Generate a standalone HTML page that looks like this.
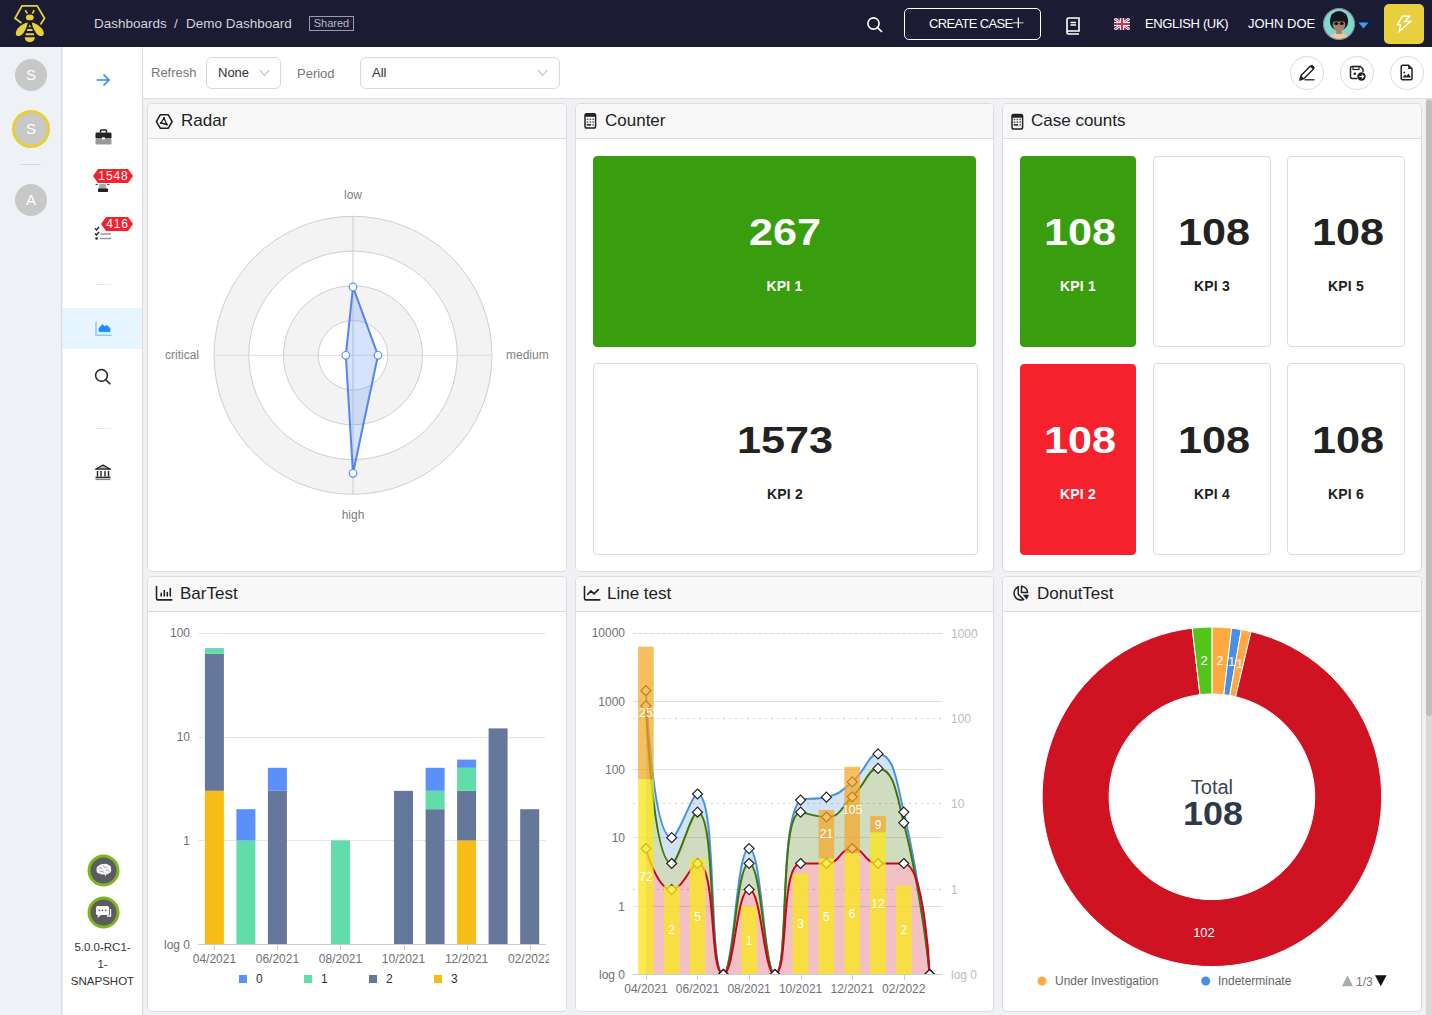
<!DOCTYPE html>
<html><head><meta charset="utf-8">
<style>
*{box-sizing:border-box;margin:0;padding:0}
html,body{width:1432px;height:1015px;overflow:hidden;background:#eff1f5;font-family:"Liberation Sans",sans-serif;position:relative}
.abs{position:absolute}
#hdr{left:0;top:0;width:1432px;height:47px;background:#1b1b33}
#hdr .t{color:#d2d2da;font-size:13.5px;top:16px;white-space:nowrap}
#col1{left:0;top:47px;width:62px;height:968px;background:#eef1f5;border-right:1px solid #d8dbe0}
#col2{left:63px;top:47px;width:80px;height:968px;background:#fff;border-right:1px solid #dcdcdc}
#tb{left:143px;top:47px;width:1289px;height:52px;background:#fff;border-bottom:1px solid #dedede}
.panel{position:absolute;background:#fff;border:1px solid #dcdcdc;border-radius:5px;overflow:hidden}
.panel .ph{position:absolute;left:0;top:0;right:0;height:35px;background:#f8f8f8;border-bottom:1px solid #dcdcdc}
.panel .ph span{position:absolute;left:33px;top:7px;font-size:17px;color:#222}
.panel .ph svg{position:absolute;left:0;top:0}
.kpi{position:absolute;border:1px solid #dcdcdc;border-radius:4px;text-align:center;color:#222}
.kpi .n{position:absolute;left:0;right:0;top:56px;font-size:36px;font-weight:bold;line-height:40px}.kpi .n span{display:inline-block;transform:scaleX(1.2);margin-left:1px}
.kpi .l{position:absolute;left:0;right:0;top:121px;font-size:14px;font-weight:bold;line-height:16px;letter-spacing:0.2px}
.kpi.r2 .n{top:57px}.kpi.r2 .l{top:122px}.kpi.g{background:#389e0d;border-color:#389e0d;color:#fff}
.kpi.r{background:#f5222d;border-color:#f5222d;color:#fff}
.av{position:absolute;border-radius:50%;background:#c8c8c8;color:#fff;font-size:14px;text-align:center;font-weight:normal}
.badge{position:absolute;background:#f5222d;color:#fff;font-size:12px;line-height:14px;height:14px;text-align:center;letter-spacing:0.9px;clip-path:polygon(5px 0,calc(100% - 5px) 0,100% 50%,calc(100% - 5px) 100%,5px 100%,0 50%)}
.circ{position:absolute;width:34px;height:34px;border-radius:50%;border:1px solid #dcdcdc;background:#fff}
</style></head><body>

<!-- HEADER -->
<div id="hdr" class="abs">
  <svg class="abs" style="left:0;top:0" width="60" height="47" viewBox="0 0 60 47">
    <path d="M21.5 23 L15 18.3 L22 5.8 L37.2 5.8 L44.5 18.3 L40.5 24.5" fill="none" stroke="#e6d03c" stroke-width="1.8"/>
    <line x1="25.3" y1="10.2" x2="27.3" y2="13.6" stroke="#e6d03c" stroke-width="1.6"/>
    <line x1="34.2" y1="10.2" x2="32.4" y2="13.6" stroke="#e6d03c" stroke-width="1.6"/>
    <ellipse cx="29.8" cy="17.4" rx="3.9" ry="2.9" fill="#e6d03c"/>
    <path d="M27.8 22.5 C22 23.5 15.5 29 15.8 33.5 C16.2 37.5 21 36.5 23.5 33 C25.5 30 27.2 26 27.8 22.5Z" fill="#e6d03c"/>
    <path d="M31.8 22.5 C37.5 23.5 44 29 43.8 33.5 C43.4 37.5 38.5 36.5 36 33 C34 30 32.4 26 31.8 22.5Z" fill="#e6d03c"/>
    <path d="M28.6 27.3 L29.8 24.3 L31 27.3Z" fill="#e6d03c"/>
    <path d="M27.4 29 L32.2 29 L32.8 31 L26.8 31Z" fill="#e6d03c"/>
    <path d="M25.8 33.3 L33.8 33.3 L34.1 35.2 L25.5 35.2Z" fill="#e6d03c"/>
    <path d="M24.6 37.3 L35 37.3 C34.8 40.5 32.5 42.2 29.8 42.2 C27 42.2 24.8 40.5 24.6 37.3Z" fill="#e6d03c"/>
  </svg>
  <div class="abs t" style="left:94px">Dashboards</div>
  <div class="abs t" style="left:174px">/</div>
  <div class="abs t" style="left:186px">Demo Dashboard</div>
  <div class="abs" style="left:309px;top:16px;width:45px;height:15px;border:1px solid #9a9aa8;color:#b8b8c4;font-size:11px;line-height:13px;text-align:center">Shared</div>
  <svg class="abs" style="left:864px;top:14px" width="22" height="22" viewBox="0 0 22 22"><circle cx="9.5" cy="9.5" r="5.6" fill="none" stroke="#fff" stroke-width="1.6"/><line x1="13.6" y1="13.6" x2="18" y2="18" stroke="#fff" stroke-width="1.7"/></svg>
  <div class="abs" style="left:904px;top:8px;width:137px;height:32px;border:1.3px solid #fff;border-radius:5px"></div>
  <div class="abs" style="left:929px;top:16px;color:#fff;font-size:13px;letter-spacing:-0.65px;white-space:nowrap">CREATE CASE</div>
  <svg class="abs" style="left:1012px;top:17px" width="12" height="12" viewBox="0 0 12 12"><path d="M0.5 5.8H11.5" stroke="#bdbdc6" stroke-width="1.2"/><path d="M6.3 0.5V11" stroke="#fff" stroke-width="1.2"/></svg>
  <svg class="abs" style="left:1064px;top:16px" width="18" height="19" viewBox="0 0 18 19"><path d="M3 3.5 Q3 2 4.5 2 H15 V15 H4.5 Q3 15 3 16.5 Q3 18 4.5 18 H15 M3 16.5 V3.5" fill="none" stroke="#fff" stroke-width="1.6"/><path d="M6.5 6.5H12M6.5 9H12" stroke="#fff" stroke-width="1.5"/></svg>
  <svg class="abs" style="left:1114px;top:18px" width="16" height="12" viewBox="0 0 16 12"><rect width="16" height="12" fill="#3a4b8c"/><path d="M0 0L16 12M16 0L0 12" stroke="#fff" stroke-width="2.6"/><path d="M0 0L16 12M16 0L0 12" stroke="#d6324a" stroke-width="1"/><path d="M8 0V12M0 6H16" stroke="#fff" stroke-width="4"/><path d="M8 0V12M0 6H16" stroke="#d6324a" stroke-width="2.2"/></svg>
  <div class="abs" style="left:1145px;top:16px;color:#fff;font-size:13px;letter-spacing:-0.35px;white-space:nowrap">ENGLISH (UK)</div>
  <div class="abs" style="left:1248px;top:16px;color:#fff;font-size:13px;white-space:nowrap">JOHN DOE</div>
  <svg class="abs" style="left:1322px;top:7px" width="34" height="34" viewBox="0 0 34 34">
    <defs><clipPath id="avc"><circle cx="17" cy="17" r="15.2"/></clipPath></defs>
    <circle cx="17" cy="17" r="15.5" fill="#7dd8cf"/>
    <g clip-path="url(#avc)">
      <path d="M5 34 Q7 26.5 17 26 Q27 26.5 29 34Z" fill="#f0c89c"/>
      <rect x="14.3" y="20" width="5.4" height="7" fill="#a8806a"/>
      <ellipse cx="17" cy="14" rx="9.2" ry="10" fill="#12151c"/>
      <ellipse cx="17" cy="18" rx="6.3" ry="6.5" fill="#a8806a"/>
      <rect x="9" y="6" width="16" height="8.5" rx="4" fill="#12151c"/>
      <ellipse cx="14.3" cy="16.6" rx="2.1" ry="1.5" fill="#151515"/>
      <ellipse cx="19.7" cy="16.6" rx="2.1" ry="1.5" fill="#151515"/>
    </g>
    <circle cx="17" cy="17" r="15.5" fill="none" stroke="#8a8a98" stroke-width="1.1"/>
  </svg>
  <svg class="abs" style="left:1358px;top:22px" width="11" height="7" viewBox="0 0 11 7"><path d="M0.5 0.5H10.5L5.5 6.5Z" fill="#3a9cf5"/></svg>
  <div class="abs" style="left:1384px;top:4px;width:40px;height:40px;background:#e8cf3e;border-radius:5px"></div>
  <svg class="abs" style="left:1394px;top:13px" width="20" height="22" viewBox="0 0 20 22"><path d="M8.2 3.2 L15.6 3.2 L10.6 8.5 L16.5 8.5 L5.3 18.5 L6.4 11.6 L3.5 11.6 Z" fill="none" stroke="#fff" stroke-width="1.4" stroke-linejoin="miter"/></svg>
</div>

<div id="col1" class="abs">
  <div class="av" style="left:15px;top:12px;width:32px;height:32px;line-height:32px;font-size:15px">S</div>
  <div class="av" style="left:12px;top:63px;width:38px;height:38px;line-height:32px;font-size:15px;border:3px solid #e6cf3b">S</div>
  <div class="abs" style="left:21px;top:117px;width:20px;height:1px;background:#d6d9de"></div>
  <div class="av" style="left:15px;top:137px;width:32px;height:32px;line-height:32px;font-size:15px">A</div>
</div>
<div id="col2" class="abs">
  <svg class="abs" style="left:32px;top:25px" width="16" height="16" viewBox="0 0 16 16"><path d="M1.5 8H14M8.5 2.5L14 8L8.5 13.5" fill="none" stroke="#2f8fef" stroke-width="1.7"/></svg>
  <svg class="abs" style="left:30.5px;top:82px" width="19" height="17" viewBox="0 0 19 17"><path d="M6.5 3.5V2Q6.5 1 7.5 1H11.5Q12.5 1 12.5 2V3.5" fill="none" stroke="#222" stroke-width="1.6"/><rect x="1.5" y="3.5" width="16" height="6" rx="1.2" fill="#222"/><rect x="1.5" y="9.5" width="16" height="6" rx="1.2" fill="#999"/><rect x="8" y="8.3" width="3" height="2.2" fill="#fff"/></svg>
  <svg class="abs" style="left:32px;top:136px" width="22" height="12" viewBox="0 0 22 12"><path d="M4.5 1H10.5L11.5 6H3.5Z" fill="#a8a8a8"/><rect x="3" y="5.5" width="10" height="3.5" rx="0.7" fill="#222"/><path d="M0.5 1.5H3M12 1.5H14.5" stroke="#555" stroke-width="1.2"/></svg>
  <div class="badge" style="left:30px;top:122px;width:40px;padding-left:1px">1548</div>
  <svg class="abs" style="left:31px;top:178px" width="18" height="16" viewBox="0 0 18 16"><path d="M1 3.5L2.5 5L5 2M1 8.5L2.5 10L5 7" fill="none" stroke="#222" stroke-width="1.4"/><circle cx="2.5" cy="13.5" r="1.2" fill="#222"/><path d="M6.5 9H17M6 13.5H17" stroke="#999" stroke-width="1.6"/></svg>
  <div class="badge" style="left:38px;top:170px;width:32px;padding-left:1px">416</div>
  <div class="abs" style="left:32px;top:237px;width:16px;height:1px;background:#e8e8e8"></div>
  <div class="abs" style="left:0;top:261px;width:79px;height:41px;background:#e6f5ff"></div>
  <svg class="abs" style="left:31px;top:272px" width="18" height="17" viewBox="0 0 18 17"><path d="M2 3.2V15.8Q2 16.3 2.5 16.3H17" fill="none" stroke="#91caff" stroke-width="1.6" stroke-linecap="round"/><path d="M5 12.7V9.2L8.3 5.4L10.7 7.6L12.8 6.2L16 9.2V12.7Z" fill="#1890ff" stroke="#1890ff" stroke-width="0.6" stroke-linejoin="round"/></svg>
  <svg class="abs" style="left:29px;top:319px" width="22" height="22" viewBox="0 0 22 22"><circle cx="9.5" cy="9.4" r="5.9" fill="none" stroke="#222" stroke-width="1.5"/><path d="M13.8 13.7L18.3 18.2" stroke="#222" stroke-width="1.6"/></svg>
  <div class="abs" style="left:32px;top:381px;width:16px;height:1px;background:#e8e8e8"></div>
  <svg class="abs" style="left:31px;top:416px" width="18" height="18" viewBox="0 0 18 18"><path d="M1.5 6.2L9 2L16.5 6.2Z" fill="#aaa" stroke="#222" stroke-width="1.3" stroke-linejoin="round"/><path d="M3.5 8V13.5M7 8V13.5M11 8V13.5M14.5 8V13.5" stroke="#222" stroke-width="1.4"/><path d="M1.5 14.3H16.5" stroke="#222" stroke-width="1.3"/><path d="M1.5 16.3H16.5" stroke="#888" stroke-width="1.6"/></svg>
  <svg class="abs" style="left:24px;top:807px" width="33" height="33" viewBox="0 0 33 33"><circle cx="16.5" cy="16.5" r="14.5" fill="#5b5c60" stroke="#7fb51d" stroke-width="3"/><path d="M9.5 16.5 Q9 12.5 12 11.5 Q13.5 9.5 16.5 10 Q19.5 9 21.5 11 Q24.5 11.5 24 15 Q25 17.5 22.5 19 Q21.5 20.5 19.5 20 L18.5 22.5 L17.5 20.3 Q14.5 21 12.5 19.5 Q9.5 19.5 9.5 16.5Z" fill="#f2f2f2"/><path d="M12 14Q14 13 15 15M16.5 11.5Q17 14 19.5 13.5M13 17.5Q15.5 16.5 17 18.5M19 16Q21.5 15.5 22 17.5" fill="none" stroke="#8a8a8a" stroke-width="0.7"/></svg>
  <svg class="abs" style="left:24px;top:849px" width="33" height="33" viewBox="0 0 33 33"><circle cx="16.5" cy="16.5" r="14.5" fill="#5b5c60" stroke="#7fb51d" stroke-width="3"/><rect x="9" y="10" width="13" height="9" rx="1.5" fill="#fff"/><path d="M11 19L10.5 22L14 19Z" fill="#fff"/><path d="M23.5 13V20H20" fill="none" stroke="#fff" stroke-width="1.3"/><circle cx="12.3" cy="14.3" r="0.9" fill="#5b5c60"/><circle cx="15.5" cy="14.3" r="0.9" fill="#5b5c60"/><circle cx="18.7" cy="14.3" r="0.9" fill="#5b5c60"/></svg>
  <div class="abs" style="left:0;top:892px;width:79px;text-align:center;font-size:11.5px;line-height:17px;color:#333">5.0.0-RC1-<br>1-<br>SNAPSHOT</div>
</div>
<div id="tb" class="abs">
  <div class="abs" style="left:8px;top:18px;font-size:13px;color:#777">Refresh</div>
  <div class="abs" style="left:63px;top:10px;width:75px;height:32px;border:1px solid #d9d9d9;border-radius:6px"></div>
  <div class="abs" style="left:75px;top:18px;font-size:13px;color:#333">None</div>
  <svg class="abs" style="left:116px;top:22px" width="11" height="8" viewBox="0 0 11 8"><path d="M0.8 1L5.5 6.5L10.2 1" fill="none" stroke="#bbb" stroke-width="1.1"/></svg>
  <div class="abs" style="left:154px;top:19px;font-size:13px;color:#777">Period</div>
  <div class="abs" style="left:217px;top:10px;width:200px;height:32px;border:1px solid #d9d9d9;border-radius:6px"></div>
  <div class="abs" style="left:229px;top:18px;font-size:13px;color:#333">All</div>
  <svg class="abs" style="left:394px;top:22px" width="11" height="8" viewBox="0 0 11 8"><path d="M0.8 1L5.5 6.5L10.2 1" fill="none" stroke="#bbb" stroke-width="1.1"/></svg>
  <div class="circ" style="left:1147px;top:9px"></div>
  <div class="circ" style="left:1197px;top:9px"></div>
  <div class="circ" style="left:1247px;top:9px"></div>
  <svg class="abs" style="left:1154px;top:16px" width="20" height="20" viewBox="0 0 20 20"><path d="M3 17L4 12.5L13.5 3L16.5 6L7 15.5Z" fill="none" stroke="#222" stroke-width="1.5" stroke-linejoin="round"/><path d="M13.5 3L15 1.5L18 4.5L16.5 6Z" fill="#222"/><path d="M3 17L4 12.5L7 15.5Z" fill="#222"/><path d="M7.5 16.8H17.5" stroke="#222" stroke-width="1.3"/></svg>
  <svg class="abs" style="left:1205px;top:16px" width="20" height="20" viewBox="0 0 20 20"><path d="M4 3.5H12.5L15 6V9M9.5 15.5H4Q2.5 15.5 2.5 14V5Q2.5 3.5 4 3.5" fill="none" stroke="#222" stroke-width="1.5"/><rect x="5" y="3.5" width="6" height="3" fill="none" stroke="#222" stroke-width="1.2"/><circle cx="6.8" cy="10.8" r="1.3" fill="#222"/><circle cx="13.5" cy="13.5" r="4.2" fill="#222"/><path d="M11.3 13.5H15.5M13.8 11.7L15.6 13.5L13.8 15.3" fill="none" stroke="#fff" stroke-width="1.1"/></svg>
  <svg class="abs" style="left:1254px;top:16px" width="20" height="20" viewBox="0 0 20 20"><path d="M5.5 2.3H11.5L15 5.8V15.5Q15 16.8 13.7 16.8H5.5Q4.2 16.8 4.2 15.5V3.6Q4.2 2.3 5.5 2.3Z" fill="none" stroke="#222" stroke-width="1.5"/><path d="M11.2 2.3V6H15" fill="#222"/><circle cx="7.3" cy="9.5" r="0.9" fill="#222"/><path d="M5.5 14.5L8 11.5L9.5 13L11.5 10.5L14 14.5Z" fill="#222"/></svg>
</div>

<!-- PANELS -->
<div class="panel" style="left:147px;top:103px;width:420px;height:469px">
  <div class="ph"><svg width="34" height="36" viewBox="0 0 34 36"><path d="M12.2 10.8H20.3L24.1 17.6L20.3 24.2H12.2L8.4 17.6Z" fill="none" stroke="#222" stroke-width="1.6" stroke-linejoin="round"/><path d="M16 14.2L12.9 19L18.8 20.5Z" fill="none" stroke="#222" stroke-width="1.3" stroke-linejoin="round"/><circle cx="16" cy="14.2" r="1.1" fill="#222"/><circle cx="12.9" cy="19" r="1.1" fill="#222"/><circle cx="18.8" cy="20.5" r="1.1" fill="#222"/></svg><span style="left:33px">Radar</span></div>
</div>
<div class="panel" style="left:575px;top:103px;width:419px;height:469px">
  <div class="ph"><svg width="30" height="36" viewBox="0 0 30 36"><rect x="9" y="9.8" width="10.6" height="14.2" rx="1.8" fill="none" stroke="#222" stroke-width="1.5"/><rect x="9" y="9.8" width="10.6" height="3" fill="#222"/><g fill="#555"><rect x="10.8" y="14.6" width="1.5" height="1.5"/><rect x="13.6" y="14.6" width="1.5" height="1.5"/><rect x="16.4" y="14.6" width="1.5" height="1.5"/><rect x="10.8" y="17.3" width="1.5" height="1.5"/><rect x="13.6" y="17.3" width="1.5" height="1.5"/><rect x="16.4" y="17.3" width="1.5" height="1.5"/><rect x="10.8" y="20.1" width="4.3" height="1.5" fill="#222"/><rect x="16.4" y="20.1" width="1.5" height="1.5"/></g></svg><span style="left:29px">Counter</span></div>
  <div class="kpi g" style="left:17px;top:52px;width:383px;height:191px"><div class="n"><span>267</span></div><div class="l">KPI 1</div></div>
  <div class="kpi r2" style="left:16.5px;top:259px;width:385px;height:192px"><div class="n"><span>1573</span></div><div class="l">KPI 2</div></div>
</div>
<div class="panel" style="left:1002px;top:103px;width:420px;height:469px">
  <div class="ph"><svg width="30" height="36" viewBox="0 0 30 36"><rect x="9" y="10.5" width="10.6" height="14.6" rx="1.8" fill="none" stroke="#222" stroke-width="1.5"/><rect x="9" y="10.5" width="10.6" height="3.2" fill="#222"/><g fill="#555"><rect x="10.8" y="14.6" width="1.5" height="1.5"/><rect x="13.6" y="14.6" width="1.5" height="1.5"/><rect x="16.4" y="14.6" width="1.5" height="1.5"/><rect x="10.8" y="17.3" width="1.5" height="1.5"/><rect x="13.6" y="17.3" width="1.5" height="1.5"/><rect x="16.4" y="17.3" width="1.5" height="1.5"/><rect x="10.8" y="20.1" width="4.3" height="1.5" fill="#222"/><rect x="16.4" y="20.1" width="1.5" height="1.5"/></g></svg><span style="left:28px">Case counts</span></div>
  <div class="kpi g" style="left:17px;top:52px;width:116px;height:191px"><div class="n"><span style="margin-left:4px">108</span></div><div class="l">KPI 1</div></div>
  <div class="kpi" style="left:150px;top:52px;width:118px;height:191px"><div class="n"><span style="margin-left:4px">108</span></div><div class="l">KPI 3</div></div>
  <div class="kpi" style="left:284px;top:52px;width:118px;height:191px"><div class="n"><span style="margin-left:4px">108</span></div><div class="l">KPI 5</div></div>
  <div class="kpi r" style="left:17px;top:260px;width:116px;height:191px"><div class="n"><span style="margin-left:4px">108</span></div><div class="l">KPI 2</div></div>
  <div class="kpi r2" style="left:150px;top:259px;width:118px;height:192px"><div class="n"><span style="margin-left:4px">108</span></div><div class="l">KPI 4</div></div>
  <div class="kpi r2" style="left:284px;top:259px;width:118px;height:192px"><div class="n"><span style="margin-left:4px">108</span></div><div class="l">KPI 6</div></div>
</div>
<div class="panel" style="left:147px;top:576px;width:420px;height:436px">
  <div class="ph"><svg width="34" height="36" viewBox="0 0 34 36"><path d="M8.5 9.5V21.5Q8.5 22.9 9.9 22.9H23.8" fill="none" stroke="#222" stroke-width="1.6" stroke-linecap="round"/><path d="M13.2 16.4V19M16.3 13.5V19M19.3 15.5V19M22.3 11.5V19" stroke="#222" stroke-width="1.6" stroke-linecap="round"/></svg><span style="left:32px">BarTest</span></div>
</div>
<div class="panel" style="left:575px;top:576px;width:419px;height:436px">
  <div class="ph"><svg width="34" height="36" viewBox="0 0 34 36"><path d="M8.5 9.5V21.5Q8.5 22.9 9.9 22.9H23.8" fill="none" stroke="#222" stroke-width="1.6" stroke-linecap="round"/><path d="M11.8 17.3L15 13.9L18 16.9L22.3 12.6" fill="none" stroke="#222" stroke-width="1.6" stroke-linecap="round" stroke-linejoin="round"/></svg><span style="left:31px">Line test</span></div>
</div>
<div class="panel" style="left:1002px;top:576px;width:420px;height:436px">
  <div class="ph"><svg width="34" height="36" viewBox="0 0 34 36"><path d="M15.3 9.8V17.4L20.7 22.5A6.9 6.9 0 1 1 15.3 9.8Z" fill="none" stroke="#222" stroke-width="1.5" stroke-linejoin="round"/><path d="M18.5 9.2V15.6H24.6A6.6 6.6 0 0 0 18.5 9.2Z" fill="none" stroke="#222" stroke-width="1.5" stroke-linejoin="round"/><path d="M19.8 17.8H25.8Q25.5 20.8 23.5 22.6Z" fill="#222"/></svg><span style="left:34px">DonutTest</span></div>
</div>

<div class="abs" style="left:1426px;top:99px;width:6px;height:916px;background:#d9d9d9"></div>
<div class="abs" style="left:1426px;top:100px;width:6px;height:616px;background:#bfbfbf;border-radius:3px"></div>
<!--CHARTS--><svg class="abs" style="left:0;top:0;pointer-events:none" width="1432" height="1015" viewBox="0 0 1432 1015"><circle cx="353" cy="355.3" r="139" fill="#f3f3f3"/>
<circle cx="353" cy="355.3" r="104.25" fill="#fff"/>
<circle cx="353" cy="355.3" r="69.5" fill="#f3f3f3"/>
<circle cx="353" cy="355.3" r="34.75" fill="#fff"/>
<circle cx="353" cy="355.3" r="139" fill="none" stroke="#cfcfcf" stroke-width="1"/>
<circle cx="353" cy="355.3" r="104.25" fill="none" stroke="#cfcfcf" stroke-width="1"/>
<circle cx="353" cy="355.3" r="69.5" fill="none" stroke="#cfcfcf" stroke-width="1"/>
<circle cx="353" cy="355.3" r="34.75" fill="none" stroke="#cfcfcf" stroke-width="1"/>
<path d="M353 216.3V494.3" stroke="#cccccc" stroke-width="1"/>
<path d="M214 355.3H492" stroke="#dedede" stroke-width="1"/>
<path d="M353.0 287.0 L378.0 355.3 L353.0 473.3 L345.8 355.3Z" fill="rgba(91,143,249,0.25)" stroke="#5584f0" stroke-width="2" stroke-linejoin="round"/>
<circle cx="353.0" cy="287.0" r="3.8" fill="#fff" stroke="#5b8ff9" stroke-width="1.2"/>
<circle cx="378.0" cy="355.3" r="3.8" fill="#fff" stroke="#5b8ff9" stroke-width="1.2"/>
<circle cx="353.0" cy="473.3" r="3.8" fill="#fff" stroke="#5b8ff9" stroke-width="1.2"/>
<circle cx="345.8" cy="355.3" r="3.8" fill="#fff" stroke="#5b8ff9" stroke-width="1.2"/>
<text x="353" y="199" text-anchor="middle" font-family="Liberation Sans" font-size="12" fill="#7f7f7f">low</text>
<text x="353" y="519" text-anchor="middle" font-family="Liberation Sans" font-size="12" fill="#7f7f7f">high</text>
<text x="506" y="359" font-family="Liberation Sans" font-size="12" fill="#7f7f7f">medium</text>
<text x="199" y="359" text-anchor="end" font-family="Liberation Sans" font-size="12" fill="#7f7f7f">critical</text>
<path d="M198 633.5H546" stroke="#e6e6e6" stroke-width="1"/>
<text x="190" y="637.1" text-anchor="end" font-family="Liberation Sans" font-size="12" fill="#6e7079">100</text>
<path d="M198 737.5H546" stroke="#e6e6e6" stroke-width="1"/>
<text x="190" y="740.9" text-anchor="end" font-family="Liberation Sans" font-size="12" fill="#6e7079">10</text>
<path d="M198 840.5H546" stroke="#e6e6e6" stroke-width="1"/>
<text x="190" y="844.7" text-anchor="end" font-family="Liberation Sans" font-size="12" fill="#6e7079">1</text>
<text x="190" y="948.8" text-anchor="end" font-family="Liberation Sans" font-size="12" fill="#6e7079">log 0</text>
<rect x="204.9" y="790.9" width="19" height="153.6" fill="#F6BD16"/>
<rect x="204.9" y="653.6" width="19" height="137.2" fill="#65789B"/>
<rect x="204.9" y="648.9" width="19" height="4.7" fill="#61DDAA"/>
<rect x="204.9" y="648.2" width="19" height="0.6" fill="#5B8FF9"/>
<rect x="236.4" y="840.4" width="19" height="104.1" fill="#61DDAA"/>
<rect x="236.4" y="809.2" width="19" height="31.2" fill="#5B8FF9"/>
<rect x="267.9" y="790.9" width="19" height="153.6" fill="#65789B"/>
<rect x="267.9" y="767.8" width="19" height="23.0" fill="#5B8FF9"/>
<rect x="331.0" y="840.4" width="19" height="104.1" fill="#61DDAA"/>
<rect x="394.0" y="790.9" width="19" height="153.6" fill="#65789B"/>
<rect x="425.6" y="809.2" width="19" height="135.3" fill="#65789B"/>
<rect x="425.6" y="790.9" width="19" height="18.3" fill="#61DDAA"/>
<rect x="425.6" y="767.8" width="19" height="23.0" fill="#5B8FF9"/>
<rect x="457.1" y="840.4" width="19" height="104.1" fill="#F6BD16"/>
<rect x="457.1" y="790.9" width="19" height="49.5" fill="#65789B"/>
<rect x="457.1" y="767.8" width="19" height="23.0" fill="#61DDAA"/>
<rect x="457.1" y="759.6" width="19" height="8.2" fill="#5B8FF9"/>
<rect x="488.6" y="728.4" width="19" height="216.1" fill="#65789B"/>
<rect x="520.2" y="809.2" width="19" height="135.3" fill="#65789B"/>
<path d="M198 944.5H546" stroke="#cccccc" stroke-width="1"/>
<path d="M214.5 945V950" stroke="#cccccc" stroke-width="1"/>
<path d="M277.5 945V950" stroke="#cccccc" stroke-width="1"/>
<path d="M340.5 945V950" stroke="#cccccc" stroke-width="1"/>
<path d="M404.5 945V950" stroke="#cccccc" stroke-width="1"/>
<path d="M467.5 945V950" stroke="#cccccc" stroke-width="1"/>
<path d="M530.5 945V950" stroke="#cccccc" stroke-width="1"/>
<clipPath id="bclip"><rect x="148" y="940" width="401" height="40"/></clipPath>
<g clip-path="url(#bclip)">
<text x="214.4" y="963" text-anchor="middle" font-family="Liberation Sans" font-size="12" fill="#6e7079">04/2021</text>
<text x="277.4" y="963" text-anchor="middle" font-family="Liberation Sans" font-size="12" fill="#6e7079">06/2021</text>
<text x="340.5" y="963" text-anchor="middle" font-family="Liberation Sans" font-size="12" fill="#6e7079">08/2021</text>
<text x="403.5" y="963" text-anchor="middle" font-family="Liberation Sans" font-size="12" fill="#6e7079">10/2021</text>
<text x="466.6" y="963" text-anchor="middle" font-family="Liberation Sans" font-size="12" fill="#6e7079">12/2021</text>
<text x="529.7" y="963" text-anchor="middle" font-family="Liberation Sans" font-size="12" fill="#6e7079">02/2022</text>
</g>
<rect x="239" y="975" width="8" height="8" fill="#5B8FF9"/>
<text x="256" y="982.5" font-family="Liberation Sans" font-size="12" fill="#333">0</text>
<rect x="304" y="975" width="8" height="8" fill="#61DDAA"/>
<text x="321" y="982.5" font-family="Liberation Sans" font-size="12" fill="#333">1</text>
<rect x="369" y="975" width="8" height="8" fill="#65789B"/>
<text x="386" y="982.5" font-family="Liberation Sans" font-size="12" fill="#333">2</text>
<rect x="434" y="975" width="8" height="8" fill="#F6BD16"/>
<text x="451" y="982.5" font-family="Liberation Sans" font-size="12" fill="#333">3</text>
<text x="625" y="636.8" text-anchor="end" font-family="Liberation Sans" font-size="12" fill="#6e7079">10000</text>
<path d="M633 701.5H942.5" stroke="#e0e0e0" stroke-width="1"/>
<text x="625" y="705.8" text-anchor="end" font-family="Liberation Sans" font-size="12" fill="#6e7079">1000</text>
<path d="M633 769.5H942.5" stroke="#e0e0e0" stroke-width="1"/>
<text x="625" y="773.8" text-anchor="end" font-family="Liberation Sans" font-size="12" fill="#6e7079">100</text>
<path d="M633 837.5H942.5" stroke="#e0e0e0" stroke-width="1"/>
<text x="625" y="841.8" text-anchor="end" font-family="Liberation Sans" font-size="12" fill="#6e7079">10</text>
<path d="M633 906.5H942.5" stroke="#e0e0e0" stroke-width="1"/>
<text x="625" y="910.8" text-anchor="end" font-family="Liberation Sans" font-size="12" fill="#6e7079">1</text>
<text x="625" y="978.8" text-anchor="end" font-family="Liberation Sans" font-size="12" fill="#6e7079">log 0</text>
<path d="M633 633.5H942.5" stroke="#ececec" stroke-width="1"/>
<path d="M633 633.5H942.5" stroke="#cfcfcf" stroke-width="1" stroke-dasharray="2 4"/>
<text x="951" y="637.8" font-family="Liberation Sans" font-size="12" fill="#bdbdbd">1000</text>
<path d="M633 718.5H942.5" stroke="#cfcfcf" stroke-width="1" stroke-dasharray="2 4"/>
<text x="951" y="722.8" font-family="Liberation Sans" font-size="12" fill="#bdbdbd">100</text>
<path d="M633 803.5H942.5" stroke="#cfcfcf" stroke-width="1" stroke-dasharray="2 4"/>
<text x="951" y="807.8" font-family="Liberation Sans" font-size="12" fill="#bdbdbd">10</text>
<path d="M633 889.5H942.5" stroke="#cfcfcf" stroke-width="1" stroke-dasharray="2 4"/>
<text x="951" y="893.8" font-family="Liberation Sans" font-size="12" fill="#bdbdbd">1</text>
<text x="951" y="978.8" font-family="Liberation Sans" font-size="12" fill="#bdbdbd">log 0</text>
<clipPath id="lclip"><rect x="633" y="600" width="310" height="374.5"/></clipPath>
<g clip-path="url(#lclip)">
<path d="M645.90 848.50 C645.90 848.50 657.00 889.60 671.69 889.60 C682.79 889.60 691.20 863.50 697.48 863.50 C716.99 863.50 708.77 974.50 723.27 974.50 C734.56 974.50 736.17 889.60 749.06 889.60 C761.96 889.60 763.56 974.50 774.85 974.50 C789.35 974.50 779.61 863.50 800.65 863.50 C805.41 863.50 814.48 863.50 826.44 863.50 C840.27 863.50 839.33 848.50 852.23 848.50 C865.13 848.50 864.19 863.50 878.02 863.50 C889.98 863.50 899.05 863.50 903.81 863.50 C924.84 863.50 929.60 974.50 929.60 974.50 L929.60 974.5 L645.90 974.5Z" fill="rgba(208,2,27,0.25)"/>
<path d="M645.90 705.80 C645.90 705.80 652.71 863.50 671.69 863.50 C678.51 863.50 690.80 812.20 697.48 812.20 C716.59 812.20 708.04 974.50 723.27 974.50 C733.83 974.50 736.17 863.50 749.06 863.50 C761.96 863.50 764.29 974.50 774.85 974.50 C790.08 974.50 778.40 812.20 800.65 812.20 C804.20 812.20 814.97 817.00 826.44 817.00 C840.76 817.00 840.35 807.99 852.23 796.80 C866.14 783.69 867.98 768.40 878.02 768.40 C893.77 768.40 896.56 793.82 903.81 822.80 C922.35 896.87 929.60 974.50 929.60 974.50 L929.60 974.50 C929.60 974.50 924.84 863.50 903.81 863.50 C899.05 863.50 889.98 863.50 878.02 863.50 C864.19 863.50 865.13 848.50 852.23 848.50 C839.33 848.50 840.27 863.50 826.44 863.50 C814.48 863.50 805.41 863.50 800.65 863.50 C779.61 863.50 789.35 974.50 774.85 974.50 C763.56 974.50 761.96 889.60 749.06 889.60 C736.17 889.60 734.56 974.50 723.27 974.50 C708.77 974.50 716.99 863.50 697.48 863.50 C691.20 863.50 682.79 889.60 671.69 889.60 C657.00 889.60 645.90 848.50 645.90 848.50Z" fill="rgba(65,117,5,0.25)"/>
<path d="M645.90 690.70 C645.90 690.70 652.44 837.70 671.69 837.70 C678.23 837.70 691.86 794.00 697.48 794.00 C717.66 794.00 708.14 974.50 723.27 974.50 C733.93 974.50 736.17 848.60 749.06 848.60 C761.96 848.60 763.98 974.50 774.85 974.50 C789.77 974.50 778.16 819.80 800.65 800.10 C803.96 797.20 814.47 800.10 826.44 797.20 C840.26 793.85 840.86 791.44 852.23 781.90 C866.66 769.79 868.37 753.90 878.02 753.90 C894.16 753.90 896.61 781.32 903.81 812.10 C922.41 891.62 929.60 974.50 929.60 974.50 L929.60 974.50 C929.60 974.50 922.35 896.87 903.81 822.80 C896.56 793.82 893.77 768.40 878.02 768.40 C867.98 768.40 866.14 783.69 852.23 796.80 C840.35 807.99 840.76 817.00 826.44 817.00 C814.97 817.00 804.20 812.20 800.65 812.20 C778.40 812.20 790.08 974.50 774.85 974.50 C764.29 974.50 761.96 863.50 749.06 863.50 C736.17 863.50 733.83 974.50 723.27 974.50 C708.04 974.50 716.59 812.20 697.48 812.20 C690.80 812.20 678.51 863.50 671.69 863.50 C652.71 863.50 645.90 705.80 645.90 705.80Z" fill="rgba(74,144,226,0.25)"/>
<path d="M645.90 690.70 C645.90 690.70 652.44 837.70 671.69 837.70 C678.23 837.70 691.86 794.00 697.48 794.00 C717.66 794.00 708.14 974.50 723.27 974.50 C733.93 974.50 736.17 848.60 749.06 848.60 C761.96 848.60 763.98 974.50 774.85 974.50 C789.77 974.50 778.16 819.80 800.65 800.10 C803.96 797.20 814.47 800.10 826.44 797.20 C840.26 793.85 840.86 791.44 852.23 781.90 C866.66 769.79 868.37 753.90 878.02 753.90 C894.16 753.90 896.61 781.32 903.81 812.10 C922.41 891.62 929.60 974.50 929.60 974.50" fill="none" stroke="#4a90e2" stroke-width="2"/>
<path d="M645.90 705.80 C645.90 705.80 652.71 863.50 671.69 863.50 C678.51 863.50 690.80 812.20 697.48 812.20 C716.59 812.20 708.04 974.50 723.27 974.50 C733.83 974.50 736.17 863.50 749.06 863.50 C761.96 863.50 764.29 974.50 774.85 974.50 C790.08 974.50 778.40 812.20 800.65 812.20 C804.20 812.20 814.97 817.00 826.44 817.00 C840.76 817.00 840.35 807.99 852.23 796.80 C866.14 783.69 867.98 768.40 878.02 768.40 C893.77 768.40 896.56 793.82 903.81 822.80 C922.35 896.87 929.60 974.50 929.60 974.50" fill="none" stroke="#417505" stroke-width="2"/>
<path d="M645.90 848.50 C645.90 848.50 657.00 889.60 671.69 889.60 C682.79 889.60 691.20 863.50 697.48 863.50 C716.99 863.50 708.77 974.50 723.27 974.50 C734.56 974.50 736.17 889.60 749.06 889.60 C761.96 889.60 763.56 974.50 774.85 974.50 C789.35 974.50 779.61 863.50 800.65 863.50 C805.41 863.50 814.48 863.50 826.44 863.50 C840.27 863.50 839.33 848.50 852.23 848.50 C865.13 848.50 864.19 863.50 878.02 863.50 C889.98 863.50 899.05 863.50 903.81 863.50 C924.84 863.50 929.60 974.50 929.60 974.50" fill="none" stroke="#d0021b" stroke-width="2"/>
<path d="M645.9 843.5L650.9 848.5L645.9 853.5L640.9 848.5Z" fill="#fff" stroke="#222" stroke-width="1.2"/>
<path d="M671.7 884.6L676.7 889.6L671.7 894.6L666.7 889.6Z" fill="#fff" stroke="#222" stroke-width="1.2"/>
<path d="M697.5 858.5L702.5 863.5L697.5 868.5L692.5 863.5Z" fill="#fff" stroke="#222" stroke-width="1.2"/>
<path d="M723.3 969.5L728.3 974.5L723.3 979.5L718.3 974.5Z" fill="#fff" stroke="#222" stroke-width="1.2"/>
<path d="M749.1 884.6L754.1 889.6L749.1 894.6L744.1 889.6Z" fill="#fff" stroke="#222" stroke-width="1.2"/>
<path d="M774.9 969.5L779.9 974.5L774.9 979.5L769.9 974.5Z" fill="#fff" stroke="#222" stroke-width="1.2"/>
<path d="M800.6 858.5L805.6 863.5L800.6 868.5L795.6 863.5Z" fill="#fff" stroke="#222" stroke-width="1.2"/>
<path d="M826.4 858.5L831.4 863.5L826.4 868.5L821.4 863.5Z" fill="#fff" stroke="#222" stroke-width="1.2"/>
<path d="M852.2 843.5L857.2 848.5L852.2 853.5L847.2 848.5Z" fill="#fff" stroke="#222" stroke-width="1.2"/>
<path d="M878.0 858.5L883.0 863.5L878.0 868.5L873.0 863.5Z" fill="#fff" stroke="#222" stroke-width="1.2"/>
<path d="M903.8 858.5L908.8 863.5L903.8 868.5L898.8 863.5Z" fill="#fff" stroke="#222" stroke-width="1.2"/>
<path d="M929.6 969.5L934.6 974.5L929.6 979.5L924.6 974.5Z" fill="#fff" stroke="#222" stroke-width="1.2"/>
<path d="M645.9 700.8L650.9 705.8L645.9 710.8L640.9 705.8Z" fill="#fff" stroke="#222" stroke-width="1.2"/>
<path d="M671.7 858.5L676.7 863.5L671.7 868.5L666.7 863.5Z" fill="#fff" stroke="#222" stroke-width="1.2"/>
<path d="M697.5 807.2L702.5 812.2L697.5 817.2L692.5 812.2Z" fill="#fff" stroke="#222" stroke-width="1.2"/>
<path d="M723.3 969.5L728.3 974.5L723.3 979.5L718.3 974.5Z" fill="#fff" stroke="#222" stroke-width="1.2"/>
<path d="M749.1 858.5L754.1 863.5L749.1 868.5L744.1 863.5Z" fill="#fff" stroke="#222" stroke-width="1.2"/>
<path d="M774.9 969.5L779.9 974.5L774.9 979.5L769.9 974.5Z" fill="#fff" stroke="#222" stroke-width="1.2"/>
<path d="M800.6 807.2L805.6 812.2L800.6 817.2L795.6 812.2Z" fill="#fff" stroke="#222" stroke-width="1.2"/>
<path d="M826.4 812.0L831.4 817.0L826.4 822.0L821.4 817.0Z" fill="#fff" stroke="#222" stroke-width="1.2"/>
<path d="M852.2 791.8L857.2 796.8L852.2 801.8L847.2 796.8Z" fill="#fff" stroke="#222" stroke-width="1.2"/>
<path d="M878.0 763.4L883.0 768.4L878.0 773.4L873.0 768.4Z" fill="#fff" stroke="#222" stroke-width="1.2"/>
<path d="M903.8 817.8L908.8 822.8L903.8 827.8L898.8 822.8Z" fill="#fff" stroke="#222" stroke-width="1.2"/>
<path d="M929.6 969.5L934.6 974.5L929.6 979.5L924.6 974.5Z" fill="#fff" stroke="#222" stroke-width="1.2"/>
<path d="M645.9 685.7L650.9 690.7L645.9 695.7L640.9 690.7Z" fill="#fff" stroke="#222" stroke-width="1.2"/>
<path d="M671.7 832.7L676.7 837.7L671.7 842.7L666.7 837.7Z" fill="#fff" stroke="#222" stroke-width="1.2"/>
<path d="M697.5 789.0L702.5 794.0L697.5 799.0L692.5 794.0Z" fill="#fff" stroke="#222" stroke-width="1.2"/>
<path d="M723.3 969.5L728.3 974.5L723.3 979.5L718.3 974.5Z" fill="#fff" stroke="#222" stroke-width="1.2"/>
<path d="M749.1 843.6L754.1 848.6L749.1 853.6L744.1 848.6Z" fill="#fff" stroke="#222" stroke-width="1.2"/>
<path d="M774.9 969.5L779.9 974.5L774.9 979.5L769.9 974.5Z" fill="#fff" stroke="#222" stroke-width="1.2"/>
<path d="M800.6 795.1L805.6 800.1L800.6 805.1L795.6 800.1Z" fill="#fff" stroke="#222" stroke-width="1.2"/>
<path d="M826.4 792.2L831.4 797.2L826.4 802.2L821.4 797.2Z" fill="#fff" stroke="#222" stroke-width="1.2"/>
<path d="M852.2 776.9L857.2 781.9L852.2 786.9L847.2 781.9Z" fill="#fff" stroke="#222" stroke-width="1.2"/>
<path d="M878.0 748.9L883.0 753.9L878.0 758.9L873.0 753.9Z" fill="#fff" stroke="#222" stroke-width="1.2"/>
<path d="M903.8 807.1L908.8 812.1L903.8 817.1L898.8 812.1Z" fill="#fff" stroke="#222" stroke-width="1.2"/>
<path d="M929.6 969.5L934.6 974.5L929.6 979.5L924.6 974.5Z" fill="#fff" stroke="#222" stroke-width="1.2"/>
</g>
<rect x="638.1" y="779.2" width="15.6" height="195.3" fill="rgba(248,231,28,0.78)"/>
<rect x="638.1" y="646.6" width="15.6" height="132.6" fill="rgba(245,166,35,0.72)"/>
<rect x="663.9" y="885.6" width="15.6" height="88.9" fill="rgba(248,231,28,0.78)"/>
<rect x="689.7" y="858.4" width="15.6" height="116.1" fill="rgba(248,231,28,0.78)"/>
<rect x="741.3" y="906.2" width="15.6" height="68.3" fill="rgba(248,231,28,0.78)"/>
<rect x="792.8" y="873.6" width="15.6" height="100.9" fill="rgba(248,231,28,0.78)"/>
<rect x="818.6" y="858.4" width="15.6" height="116.1" fill="rgba(248,231,28,0.78)"/>
<rect x="818.6" y="809.9" width="15.6" height="48.5" fill="rgba(245,166,35,0.72)"/>
<rect x="844.4" y="853.0" width="15.6" height="121.5" fill="rgba(248,231,28,0.78)"/>
<rect x="844.4" y="766.8" width="15.6" height="86.2" fill="rgba(245,166,35,0.72)"/>
<rect x="870.2" y="832.4" width="15.6" height="142.1" fill="rgba(248,231,28,0.78)"/>
<rect x="870.2" y="816.2" width="15.6" height="16.2" fill="rgba(245,166,35,0.72)"/>
<rect x="896.0" y="885.6" width="15.6" height="88.9" fill="rgba(248,231,28,0.78)"/>
<text x="645.9" y="881.1" text-anchor="middle" font-family="Liberation Sans" font-size="12" fill="#fff">72</text>
<text x="645.9" y="717.2" text-anchor="middle" font-family="Liberation Sans" font-size="12" fill="#fff">2253</text>
<text x="671.7" y="934.4" text-anchor="middle" font-family="Liberation Sans" font-size="12" fill="#fff">2</text>
<text x="697.5" y="920.7" text-anchor="middle" font-family="Liberation Sans" font-size="12" fill="#fff">5</text>
<text x="749.1" y="944.6" text-anchor="middle" font-family="Liberation Sans" font-size="12" fill="#fff">1</text>
<text x="800.6" y="928.3" text-anchor="middle" font-family="Liberation Sans" font-size="12" fill="#fff">3</text>
<text x="826.4" y="920.7" text-anchor="middle" font-family="Liberation Sans" font-size="12" fill="#fff">5</text>
<text x="826.4" y="838.4" text-anchor="middle" font-family="Liberation Sans" font-size="12" fill="#fff">21</text>
<text x="852.2" y="918.0" text-anchor="middle" font-family="Liberation Sans" font-size="12" fill="#fff">6</text>
<text x="852.2" y="814.2" text-anchor="middle" font-family="Liberation Sans" font-size="12" fill="#fff">105</text>
<text x="878.0" y="907.7" text-anchor="middle" font-family="Liberation Sans" font-size="12" fill="#fff">12</text>
<text x="878.0" y="828.6" text-anchor="middle" font-family="Liberation Sans" font-size="12" fill="#fff">9</text>
<text x="903.8" y="934.4" text-anchor="middle" font-family="Liberation Sans" font-size="12" fill="#fff">2</text>
<path d="M633 974.5H942.5" stroke="#cccccc" stroke-width="1"/>
<path d="M646.5 975V980" stroke="#cccccc" stroke-width="1"/>
<text x="645.9" y="993" text-anchor="middle" font-family="Liberation Sans" font-size="12" fill="#6e7079">04/2021</text>
<path d="M697.5 975V980" stroke="#cccccc" stroke-width="1"/>
<text x="697.5" y="993" text-anchor="middle" font-family="Liberation Sans" font-size="12" fill="#6e7079">06/2021</text>
<path d="M749.5 975V980" stroke="#cccccc" stroke-width="1"/>
<text x="749.1" y="993" text-anchor="middle" font-family="Liberation Sans" font-size="12" fill="#6e7079">08/2021</text>
<path d="M801.5 975V980" stroke="#cccccc" stroke-width="1"/>
<text x="800.6" y="993" text-anchor="middle" font-family="Liberation Sans" font-size="12" fill="#6e7079">10/2021</text>
<path d="M852.5 975V980" stroke="#cccccc" stroke-width="1"/>
<text x="852.2" y="993" text-anchor="middle" font-family="Liberation Sans" font-size="12" fill="#6e7079">12/2021</text>
<path d="M904.5 975V980" stroke="#cccccc" stroke-width="1"/>
<text x="903.8" y="993" text-anchor="middle" font-family="Liberation Sans" font-size="12" fill="#6e7079">02/2022</text>
<path d="M1211.90 627.00A169.8 169.8 0 0 1 1231.61 628.15L1223.83 694.70A102.8 102.8 0 0 0 1211.90 694.00Z" fill="#ffa940" stroke="#fff" stroke-width="1" stroke-linejoin="round"/>
<path d="M1231.61 628.15A169.8 169.8 0 0 1 1241.39 629.58L1229.75 695.56A102.8 102.8 0 0 0 1223.83 694.70Z" fill="#4a90e2" stroke="#fff" stroke-width="1" stroke-linejoin="round"/>
<path d="M1241.39 629.58A169.8 169.8 0 0 1 1251.06 631.58L1235.61 696.77A102.8 102.8 0 0 0 1229.75 695.56Z" fill="#ffa940" stroke="#fff" stroke-width="1" stroke-linejoin="round"/>
<path d="M1251.06 631.58A169.8 169.8 0 1 1 1192.19 628.15L1199.97 694.70A102.8 102.8 0 1 0 1235.61 696.77Z" fill="#cf1322" stroke="#fff" stroke-width="1" stroke-linejoin="round"/>
<path d="M1192.19 628.15A169.8 169.8 0 0 1 1211.90 627.00L1211.90 694.00A102.8 102.8 0 0 0 1199.97 694.70Z" fill="#52c41a" stroke="#fff" stroke-width="1" stroke-linejoin="round"/>
<text x="1219.8" y="665.2" text-anchor="middle" font-family="Liberation Sans" font-size="13" fill="#fff">2</text>
<text x="1231.7" y="666.4" text-anchor="middle" font-family="Liberation Sans" font-size="13" fill="#fff">1</text>
<text x="1239.5" y="667.8" text-anchor="middle" font-family="Liberation Sans" font-size="13" fill="#fff">1</text>
<text x="1204.0" y="937.4" text-anchor="middle" font-family="Liberation Sans" font-size="13" fill="#fff">102</text>
<text x="1204.0" y="665.2" text-anchor="middle" font-family="Liberation Sans" font-size="13" fill="#fff">2</text>
<text x="1211.9" y="793.8" text-anchor="middle" font-family="Liberation Sans" font-size="20" fill="#3a4555">Total</text>
<text x="1212.9" y="825" text-anchor="middle" font-family="Liberation Sans" font-size="34" font-weight="bold" fill="#2e3a4a" textLength="60" lengthAdjust="spacingAndGlyphs">108</text>
<circle cx="1042" cy="981" r="4.5" fill="#ffa940"/>
<text x="1055" y="984.8" font-family="Liberation Sans" font-size="12" fill="#666">Under Investigation</text>
<circle cx="1205.7" cy="981" r="4.5" fill="#4a90e2"/>
<text x="1218" y="984.8" font-family="Liberation Sans" font-size="12" fill="#666">Indeterminate</text>
<path d="M1342 986.2L1347.5 975.3L1353 986.2Z" fill="#aaa"/>
<text x="1356" y="985.5" font-family="Liberation Sans" font-size="12" fill="#777">1/3</text>
<path d="M1375 975.3L1386.6 975.3L1380.8 986.2Z" fill="#111"/></svg><!--/CHARTS-->
</body></html>
